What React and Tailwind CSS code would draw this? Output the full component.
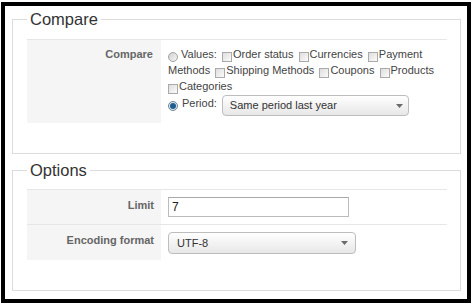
import React from "react";

function Box({ first }) {
  return (
    <span
      className={
        first
          ? "inline-block w-[10px] h-[10px] mr-[1px] border border-[#aaaaaa] bg-linear-to-br from-[#dedede] to-[#fbfbfb] align-[-4px]"
          : "inline-block w-[10px] h-[10px] ml-[2px] mr-[1px] border border-[#aaaaaa] bg-linear-to-br from-[#dedede] to-[#fbfbfb] align-[-4px]"
      }
    />
  );
}

function Radio({ checked }) {
  if (checked) {
    return (
      <span className="inline-flex items-center justify-center w-[10px] h-[10px] rounded-full border border-[#6f8596] bg-[#dfe7ee]">
        <span className="w-[6px] h-[6px] rounded-full bg-[#1f5f8f]" />
      </span>
    );
  }
  return (
    <span className="inline-block w-[10px] h-[10px] rounded-full border border-[#a3a3a3] bg-linear-to-br from-[#cfcfcf] to-[#f7f7f7] align-[-4px]" />
  );
}

function Arrow() {
  return (
    <svg width="7" height="4" viewBox="0 0 7 4" className="shrink-0">
      <path d="M0 0 H7 L3.5 4 Z" fill="#6b6b6b" />
    </svg>
  );
}

function Select({ value, className }) {
  return (
    <div
      className={
        "flex items-center justify-between rounded-[4px] border border-[#bdbdbd] bg-linear-to-b from-white to-[#e7e7e7] " +
        className
      }
    >
      <span className="leading-[19px] text-[11px] text-[#333]">{value}</span>
      <Arrow />
    </div>
  );
}

function Label({ children }) {
  return (
    <div className="bg-[#f5f5f5] text-right pr-[7px] pt-[7px] text-[11px] leading-[16px] font-bold text-[#666]">
      {children}
    </div>
  );
}

export default function App() {
  return (
    <div className="w-[474px] h-[305px] bg-white overflow-hidden font-['Liberation_Sans',Arial,sans-serif]">
      <div className="ml-[1px] mt-[2px] w-[470px] h-[301px] border-4 border-black">
        <fieldset className="ml-[7px] mt-[3px] w-[449px] border border-[#dcdcdc] pl-[14px] pr-[13px] pt-[10px] pb-[30px]">
          <legend className="px-[3px] text-[16.5px] leading-[20px] text-[#333]">Compare</legend>
          <div className="grid grid-cols-[134px_1fr] border-t border-[#e6e6e6]">
            <div className="bg-[#f5f5f5] text-right pr-[8px] pt-[6px] text-[11px] leading-[16px] font-bold text-[#666]">
              Compare
            </div>
            <div className="pl-[7px] pr-[4px] pt-[6px] pb-[7px] text-[11px] leading-[16px] text-[#444]">
              <div>
                <span className="mr-[3px]">
                  <Radio />
                </span>
                Values:{" "}
                <span className="whitespace-nowrap">
                  <Box />
                  Order
                </span>{" "}
                status{" "}
                <span className="whitespace-nowrap">
                  <Box />
                  Currencies
                </span>{" "}
                <span className="whitespace-nowrap">
                  <Box />
                  Payment
                </span>{" "}
                Methods{" "}
                <span className="whitespace-nowrap">
                  <Box />
                  Shipping
                </span>{" "}
                Methods{" "}
                <span className="whitespace-nowrap">
                  <Box />
                  Coupons
                </span>{" "}
                <span className="whitespace-nowrap">
                  <Box />
                  Products
                </span>
              </div>
              <div>
                <Box first />
                Categories
              </div>
              <div className="flex items-start h-[22px]">
                <span className="mt-[7px] mr-[4px] flex">
                  <Radio checked />
                </span>
                <span className="mt-[1px] mr-[5px]">Period:</span>
                <Select value="Same period last year" className="mt-[1px] w-[187px] h-[21px] pl-[7px] pr-[5px]" />
              </div>
            </div>
          </div>
        </fieldset>

        <fieldset className="ml-[7px] mt-[6px] w-[449px] border border-[#dcdcdc] pl-[14px] pr-[13px] pt-[9px] pb-[30px]">
          <legend className="px-[3px] text-[16.5px] leading-[20px] text-[#333]">Options</legend>
          <div className="grid grid-cols-[134px_1fr] border-t border-[#e6e6e6]">
            <Label>Limit</Label>
            <div className="pl-[7px] pt-[7px] pb-[7px]">
              <div className="w-[181px] h-[20px] border border-[#bcbcbc] border-t-[#a9a9a9] bg-white pl-[3px] text-[12px] leading-[18px] text-[#222]">
                7
              </div>
            </div>
          </div>
          <div className="grid grid-cols-[134px_1fr] border-t border-[#e6e6e6]">
            <Label>Encoding format</Label>
            <div className="pl-[7px] pt-[7px] pb-[6px]">
              <Select value="UTF-8" className="w-[188px] h-[22px] pl-[8px] pr-[7px]" />
            </div>
          </div>
        </fieldset>
      </div>
    </div>
  );
}
